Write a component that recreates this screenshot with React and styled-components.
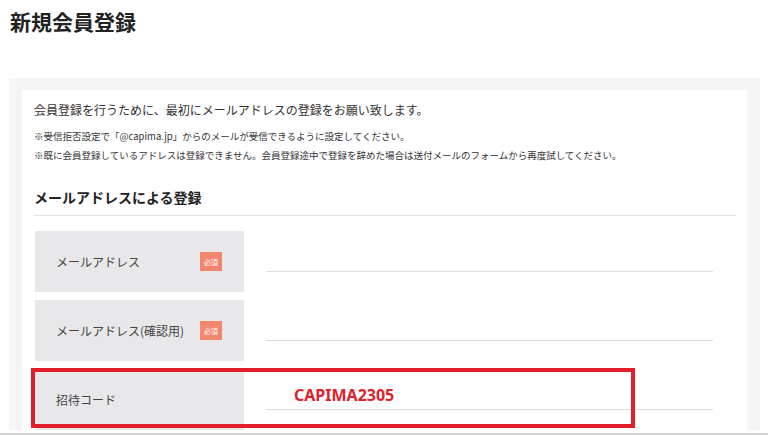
import React from "react";
import styled, { createGlobalStyle } from "styled-components";

const GlobalStyle = createGlobalStyle`
  body {
    margin: 0;
    background: #fff;
    color: #333;
    font-family: "Noto Sans CJK JP", "Noto Sans", sans-serif;
  }
`;

const fields = [
  { label: "メールアドレス", required: true },
  { label: "メールアドレス(確認用)", required: true },
  { label: "招待コード", value: "CAPIMA2305", marked: true },
];

const App = () => {
  return (
    <Page>
      <GlobalStyle />
      <Title>新規会員登録</Title>
      <Panel>
        <Card>
          <Lead>会員登録を行うために、最初にメールアドレスの登録をお願い致します。</Lead>
          <Note first>※受信拒否設定で「@capima.jp」からのメールが受信できるように設定してください。</Note>
          <Note>※既に会員登録しているアドレスは登録できません。会員登録途中で登録を辞めた場合は送付メールのフォームから再度試してください。</Note>
          <Heading>メールアドレスによる登録</Heading>
          <Rows>
            {fields.map((f) => (
              <Row key={f.label}>
                <Label>
                  <span>{f.label}</span>
                  {f.required && <Badge>必須</Badge>}
                </Label>
                <Field>
                  <Value>{f.value}</Value>
                </Field>
                {f.marked && <Marker />}
              </Row>
            ))}
          </Rows>
        </Card>
      </Panel>
    </Page>
  );
};

export default App;

const Page = styled.div`
  height: 435px;
  overflow: hidden;
  border-bottom: 2px solid #d6d6d6;
  box-sizing: border-box;
`;

const Title = styled.h1`
  margin: 0;
  padding: 6px 10px 0;
  font-size: 21px;
  line-height: 30px;
  font-weight: 700;
  color: #222;
`;

const Panel = styled.div`
  margin: 42px 8px 0 9px;
  padding: 12px 13px 0 13px;
  background: #f5f5f5;
`;

const Card = styled.div`
  background: #fff;
  padding: 10px 11px 0 12px;
`;

const Lead = styled.p`
  margin: 0;
  font-size: 12px;
  line-height: 20px;
`;

const Note = styled.p`
  margin: ${(p) => (p.first ? "7px" : "0")} 0 0;
  font-size: 9.5px;
  line-height: 19px;
`;

const Heading = styled.h2`
  margin: 21px 0 0;
  padding-bottom: 7px;
  border-bottom: 1px solid #e2e2e2;
  font-size: 14px;
  line-height: 22px;
  font-weight: 700;
  color: #222;
`;

const Rows = styled.div`
  display: flex;
  flex-direction: column;
  gap: 8px;
  padding-top: 15px;
`;

const Row = styled.div`
  position: relative;
  display: flex;
  height: 61px;
`;

const Label = styled.div`
  flex: 0 0 209px;
  margin-left: 1px;
  box-sizing: border-box;
  display: flex;
  align-items: center;
  justify-content: space-between;
  padding: 0 22px 0 21px;
  background: #e8e8ea;
  font-size: 12px;
  color: #444;
`;

const Badge = styled.span`
  display: inline-flex;
  align-items: center;
  justify-content: center;
  width: 22px;
  height: 19px;
  background: #f4866f;
  color: #fff;
  font-size: 7px;
`;

const Field = styled.div`
  flex: 1;
  margin: 0 23px 0 22px;
  height: 40px;
  border-bottom: 1px solid #dedede;
  display: flex;
  align-items: flex-end;
`;

const Value = styled.span`
  padding: 0 0 3px 28px;
  font-family: "Noto Sans", "Open Sans", sans-serif;
  font-size: 16px;
  font-weight: 700;
  color: #e0202c;
`;

const Marker = styled.div`
  position: absolute;
  top: -1px;
  left: -3px;
  width: 604px;
  height: 60px;
  box-sizing: border-box;
  border: 4px solid #e31d2a;
  pointer-events: none;
`;
